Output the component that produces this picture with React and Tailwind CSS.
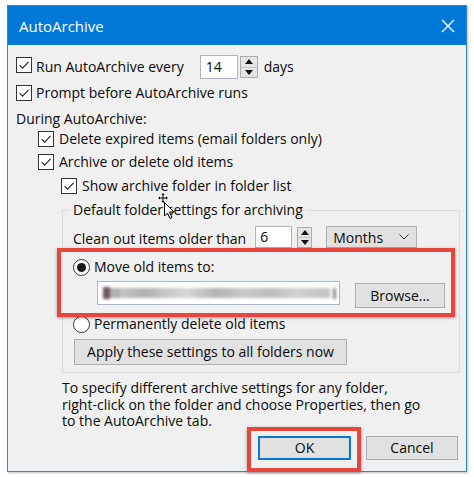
import React from "react";

function Check({ className = "" }) {
  return (
    <span className={`flex h-4 w-4 shrink-0 items-center justify-center border border-[#333333] bg-white ${className}`}>
      <svg width="12" height="12" viewBox="0 0 12 12">
        <path d="M1.6 6.2 L4.6 9.2 L10.6 2.9" fill="none" stroke="#222222" strokeWidth="1.1" />
      </svg>
    </span>
  );
}

function Radio({ on }) {
  return (
    <span className="flex h-[17px] w-[17px] shrink-0 items-center justify-center rounded-full border border-[#333333] bg-white">
      {on ? <span className="h-[9px] w-[9px] rounded-full bg-[#1a1a1a]" /> : null}
    </span>
  );
}

function Arrow({ up }) {
  return (
    <svg width="8" height="5" viewBox="0 0 8 5">
      {up ? <path d="M0 5 L4 0 L8 5 Z" fill="#111111" /> : <path d="M0 0 L8 0 L4 5 Z" fill="#111111" />}
    </svg>
  );
}

function Spin({ className = "" }) {
  return (
    <div className={`flex shrink-0 flex-col border border-[#adadad] bg-[#e5e5e5] ${className}`}>
      <div className="flex flex-1 items-center justify-center border-b border-[#c4c4c4]">
        <Arrow up />
      </div>
      <div className="flex flex-1 items-center justify-center">
        <Arrow />
      </div>
    </div>
  );
}

export default function App() {
  return (
    <div className="min-h-[477px] bg-white pt-[5px] font-['Open_Sans',sans-serif] text-[14px] leading-5 text-[#0a0a0a]">
      <div className="relative ml-[7px] w-[460px] border border-[#2b86d9] bg-[#f0f0f0] shadow-[1px_1px_2px_rgba(0,0,0,0.25)]">
        {/* Title bar */}
        <div className="flex h-[39px] items-center justify-between bg-[#0078d7] px-[11px] text-[15px] text-white">
          <span>AutoArchive</span>
          <svg width="14" height="14" viewBox="0 0 14 14">
            <path d="M1 1 L13 13 M13 1 L1 13" stroke="#ffffff" strokeWidth="1.4" />
          </svg>
        </div>

        {/* Body */}
        <div className="px-[8px] pb-[11px] pt-[10px]">
          <div className="flex h-[24px] items-center">
            <Check className="-translate-y-[2px]" />
            <span className="ml-[4px]">Run AutoArchive every</span>
            <div className="ml-[16px] flex h-[24px] w-[38px] items-center border border-[#a9b6c9] bg-white pl-[5px]">14</div>
            <Spin className="ml-[2px] h-[22px] w-[18px]" />
            <span className="ml-[6px]">days</span>
          </div>

          <div className="mt-[4px] flex h-5 items-center">
            <Check />
            <span className="ml-[4px]">Prompt before AutoArchive runs</span>
          </div>

          <div className="mt-[6px] flex h-5 items-center">During AutoArchive:</div>

          <div className="flex h-5 items-center pl-[22px]">
            <Check />
            <span className="ml-[5px]">Delete expired items (email folders only)</span>
          </div>

          <div className="mt-[3px] flex h-5 items-center pl-[22px]">
            <Check />
            <span className="ml-[5px]">Archive or delete old items</span>
          </div>

          <div className="mt-[4px] flex h-5 items-center pl-[45px]">
            <Check />
            <span className="ml-[5px]">Show archive folder in folder list</span>
          </div>

          <fieldset className="ml-[46px] mt-[4px] w-[398px] border border-[#dcdcdc] pb-[7px] pl-[7px]">
            <legend className="px-[3px] leading-5">Default folder settings for archiving</legend>
            <div className="pl-[3px]">
              <div className="mt-[6px] flex h-[22px] items-center">
                <span className="mt-[4px]">Clean out items older than</span>
                <div className="ml-[9px] flex h-[22px] w-[37px] items-center border border-[#a9b6c9] bg-white pl-[4px]">6</div>
                <Spin className="ml-[5px] h-[21px] w-[15px]" />
                <div className="ml-[14px] flex h-[22px] w-[91px] items-center justify-between border border-[#adadad] bg-[#e1e1e1] pl-[6px] pr-[7px]">
                  <span className="mt-[2px]">Months</span>
                  <svg width="10" height="6" viewBox="0 0 10 6">
                    <path d="M0.5 0.5 L5 5 L9.5 0.5" fill="none" stroke="#333333" strokeWidth="1" />
                  </svg>
                </div>
              </div>

              <div className="relative z-10 -ml-[16px] w-[398px] border-4 border-[#e8453c] pb-[5px] pl-[12px] pr-[6px] pt-[5px] shadow-[0_1px_3px_rgba(0,0,0,0.35)]">
                <div className="flex h-5 items-center">
                  <Radio on />
                  <span className="ml-[4px]">Move old items to:</span>
                </div>
                <div className="mt-[4px] flex items-start">
                  <div className="ml-[24px] flex h-[24px] w-[243px] items-center overflow-hidden border border-[#a9b6c9] bg-white pl-[5px]">
                    <div className="flex items-center blur-[1.6px]">
                      <span className="h-[12px] w-[7px] bg-[#6b5660]" />
                      <span className="h-[10px] w-[10px] bg-[#b3aeb2]" />
                      <span className="h-[10px] w-[210px] bg-[linear-gradient(90deg,#c4c4c4,#b0b0b0_12%,#cbcbcb_24%,#d6d6d6_32%,#b2b2b2_46%,#c9c9c9_58%,#bdbdbd_72%,#d0d0d0_84%,#c2c2c2)]" />
                      <span className="ml-[3px] h-[11px] w-[3px] bg-[#8a8a8a]" />
                    </div>
                  </div>
                  <div className="ml-[15px] mt-[2px] flex h-[25px] w-[90px] items-center justify-center border border-[#adadad] bg-[#e1e1e1]">
                    Browse...
                  </div>
                </div>
              </div>

              <div className="-mt-[3px] flex h-5 items-center">
                <Radio />
                <span className="ml-[4px]">Permanently delete old items</span>
              </div>

              <div className="ml-[1px] mt-[5px] flex h-[26px] w-[273px] items-center justify-center border border-[#adadad] bg-[#e1e1e1]">
                Apply these settings to all folders now
              </div>
            </div>
          </fieldset>

          <p className="ml-[46px] mt-[7px] leading-[16.5px]">
            To specify different archive settings for any folder,
            <br />
            right-click on the folder and choose Properties, then go
            <br />
            to the AutoArchive tab.
          </p>

          <div className="mt-[6px] flex items-start justify-end">
            <div className="-mb-[12px] -ml-[11px] -mr-[10px] -mt-[9px] border-4 border-[#e8453c] pb-[8px] pl-[7px] pr-[6px] pt-[5px] shadow-[0_1px_3px_rgba(0,0,0,0.35)]">
              <div className="flex h-[24px] w-[93px] items-center justify-center border-2 border-[#0078d7] bg-[#e1e1e1]">OK</div>
            </div>
            <div className="ml-[15px] flex h-[24px] w-[92px] items-center justify-center border border-[#adadad] bg-[#e1e1e1]">
              Cancel
            </div>
          </div>
        </div>

        {/* mouse cursor */}
        <svg className="absolute left-[150px] top-[187px] z-20" width="20" height="28" viewBox="0 0 20 28">
          <path d="M5 1 L5 9 M1 5 L9 5" stroke="#000000" strokeWidth="1" />
          <path d="M5 0 L3.5 2 L6.5 2 Z M5 10 L3.5 8 L6.5 8 Z M0 5 L2 3.5 L2 6.5 Z M10 5 L8 3.5 L8 6.5 Z" fill="#000000" />
          <path d="M6.5 9.5 L6.5 23 L9.5 20 L12 25.5 L14 24.5 L11.5 19 L16 19 Z" fill="#ffffff" stroke="#000000" strokeWidth="1" />
        </svg>
      </div>
    </div>
  );
}
